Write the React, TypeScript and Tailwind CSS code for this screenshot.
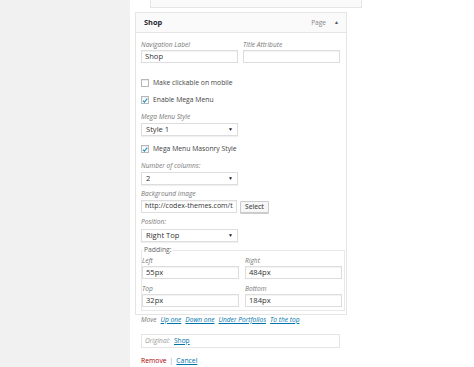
import React from 'react';

const font = { fontFamily: '"Open Sans", "Liberation Sans", sans-serif' };

const Label: React.FC<{ children: React.ReactNode }> = ({ children }) => (
  <div className="h-[8px] leading-[8px] text-[6.6px] italic text-[#777]">{children}</div>
);

const TextInput: React.FC<{ value?: string; w?: string; size?: string }> = ({
  value = '',
  w = 'w-[97px]',
  size = 'text-[7.6px]',
}) => (
  <div className={`${w} ${size} h-[13px] border border-[#ddd] bg-white shadow-[inset_0_1px_1px_rgba(0,0,0,0.05)] px-[3px] flex items-center text-[#333] overflow-hidden whitespace-nowrap`}>
    {value}
  </div>
);

const SelectBox: React.FC<{ value: string }> = ({ value }) => (
  <div className="w-[97px] h-[13px] border border-[#ddd] bg-white shadow-[0_1px_1px_rgba(0,0,0,0.06)] pl-[4px] pr-[4px] flex items-center justify-between text-[7.6px] text-[#333]">
    <span>{value}</span>
    <span className="text-[5px] text-[#222]">▼</span>
  </div>
);

const Check: React.FC<{ checked?: boolean; label: string }> = ({ checked, label }) => (
  <div className="flex items-center h-[8px] gap-[4px]">
    <div className="w-[8px] h-[8px] border border-[#b4b9be] bg-white shadow-[inset_0_1px_1px_rgba(0,0,0,0.08)] flex items-center justify-center">
      {checked && (
        <svg width="7" height="7" viewBox="0 0 10 10">
          <path d="M1.5 5.2 L4 7.8 L8.8 1.8" fill="none" stroke="#1e8cbe" strokeWidth="1.8" />
        </svg>
      )}
    </div>
    <span className="text-[6.8px] text-[#444] leading-[8px]">{label}</span>
  </div>
);

const App: React.FC = () => {
  return (
    <div className="flex w-[474px] h-[367px] bg-white overflow-hidden" style={font}>
      {/* left admin column */}
      <div className="w-[130px] h-full bg-[#f1f1f1]" />

      <div className="flex-1 flex flex-col">
        {/* previous menu item, cut off at the top */}
        <div className="ml-[20px] w-[212px] h-[8px] border-x border-b border-[#e5e5e5] bg-[#fafafa]" />

        {/* menu item panel */}
        <div className="ml-[5px] mt-[4px] w-[212px] border border-[#e5e5e5] bg-white">
          <div className="h-[20px] bg-[#fafafa] border-b border-[#e5e5e5] flex items-center pl-[8px] pr-[7px]">
            <span className="text-[7.4px] font-bold text-[#23282d]">Shop</span>
            <span className="ml-auto text-[6.6px] text-[#888]">Page</span>
            <span className="ml-[8px] text-[5px] text-[#555]">▲</span>
          </div>

          <div className="pl-[5px] pr-[6px] pt-[8px]">
            <div className="flex gap-[5px]">
              <div className="flex flex-col gap-[1px]">
                <Label>Navigation Label</Label>
                <TextInput value="Shop" />
              </div>
              <div className="flex flex-col gap-[1px]">
                <Label>Title Attribute</Label>
                <TextInput />
              </div>
            </div>

            <div className="mt-[16px]">
              <Check label="Make clickable on mobile" />
            </div>
            <div className="mt-[9px]">
              <Check checked label="Enable Mega Menu" />
            </div>

            <div className="mt-[9px] flex flex-col gap-[2px]">
              <Label>Mega Menu Style</Label>
              <SelectBox value="Style 1" />
            </div>

            <div className="mt-[9px]">
              <Check checked label="Mega Menu Masonry Style" />
            </div>

            <div className="mt-[9px] flex flex-col gap-[2px]">
              <Label>Number of columns:</Label>
              <SelectBox value="2" />
            </div>

            <div className="mt-[5px] flex flex-col gap-[2px]">
              <Label>Background image</Label>
              <div className="flex items-center gap-[3px]">
                <TextInput value="http://codex-themes.com/t" w="w-[96px]" size="text-[7px]" />
                <div className="h-[12px] px-[4px] border border-[#ccc] bg-[#f7f7f7] shadow-[0_1px_0_#ccc] rounded-[1px] flex items-center text-[6.6px] font-semibold text-[#555]">
                  Select
                </div>
              </div>
            </div>

            <div className="mt-[5px] flex flex-col gap-[3px]">
              <Label>Position:</Label>
              <SelectBox value="Right Top" />
            </div>

            <fieldset className="mt-[4px] mr-[-5px] border border-[#e8e8e8] px-0 pb-[3px]">
              <legend className="ml-[1px] px-[1px] text-[6.8px] text-[#666] leading-[8px]">Padding:</legend>
              <div className="flex gap-[6px] mt-[3px]">
                <div className="flex flex-col gap-[1px]">
                  <Label>Left</Label>
                  <TextInput value="55px" />
                </div>
                <div className="flex flex-col gap-[1px]">
                  <Label>Right</Label>
                  <TextInput value="484px" />
                </div>
              </div>
              <div className="flex gap-[6px] mt-[6px]">
                <div className="flex flex-col gap-[1px]">
                  <Label>Top</Label>
                  <TextInput value="32px" />
                </div>
                <div className="flex flex-col gap-[1px]">
                  <Label>Bottom</Label>
                  <TextInput value="184px" />
                </div>
              </div>
            </fieldset>
          </div>
          <div className="h-[3px]" />
        </div>

        {/* move links */}
        <div className="ml-[11px] h-[9px] flex items-center gap-[4px] text-[6.6px] italic">
          <span className="text-[#777]">Move</span>
          <span className="text-[#0073aa] underline">Up one</span>
          <span className="text-[#0073aa] underline">Down one</span>
          <span className="text-[#0073aa] underline">Under Portfolios</span>
          <span className="text-[#0073aa] underline">To the top</span>
        </div>

        <div className="ml-[11px] mt-[10px] w-[199px] h-[14px] border border-[#e5e5e5] flex items-center pl-[3px] gap-[4px] text-[6.6px]">
          <span className="italic text-[#999]">Original:</span>
          <span className="text-[#0073aa] underline">Shop</span>
        </div>

        <div className="ml-[11px] mt-[8px] flex items-center gap-[3px] text-[6.8px]">
          <span className="text-[#a00]">Remove</span>
          <span className="text-[#999]">|</span>
          <span className="text-[#0073aa] underline">Cancel</span>
        </div>
      </div>
    </div>
  );
};

export default App;
